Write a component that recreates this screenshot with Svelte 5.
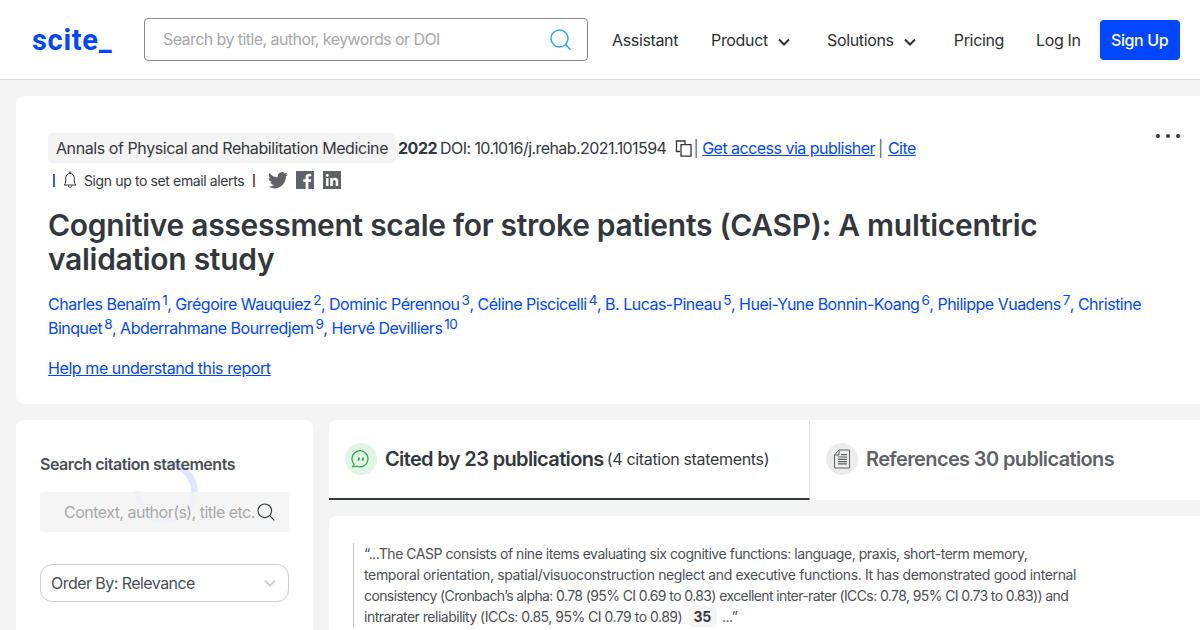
<script>
  const authors = [
    ['Charles Benaïm', 1], ['Grégoire Wauquiez', 2], ['Dominic Pérennou', 3], ['Céline Piscicelli', 4],
    ['B. Lucas-Pineau', 5], ['Huei-Yune Bonnin-Koang', 6], ['Philippe Vuadens', 7], ['Christine Binquet', 8],
    ['Abderrahmane Bourredjem', 9], ['Hervé Devilliers', 10]
  ]
</script>

<div class="page">
  <header class="topbar">
    <div class="logo">scite_</div>
    <div class="search">
      <span class="placeholder">Search by title, author, keywords or DOI</span>
      <svg width="24" height="24" viewBox="0 0 24 24" fill="none" stroke="#2aa8f5" stroke-width="1.5"><circle cx="10.5" cy="10.5" r="8.5"/><path d="M16.7 16.7l5 5"/></svg>
    </div>
    <nav class="nav">
      <span class="item assistant">Assistant</span>
      <span class="item product">Product
        <svg width="12" height="8" viewBox="0 0 12 8" fill="none" stroke="#2b2f33" stroke-width="2"><path d="M1 1.5l5 5 5-5"/></svg>
      </span>
      <span class="item solutions">Solutions
        <svg width="12" height="8" viewBox="0 0 12 8" fill="none" stroke="#2b2f33" stroke-width="2"><path d="M1 1.5l5 5 5-5"/></svg>
      </span>
      <span class="item pricing">Pricing</span>
      <span class="item login">Log In</span>
      <span class="signup">Sign Up</span>
    </nav>
  </header>

  <section class="report">
    <div class="dots"><i></i><i></i><i></i></div>
    <div class="meta">
      <span class="journal">Annals of Physical and Rehabilitation Medicine</span>
      <b class="year">2022</b>
      <span class="doi">DOI: 10.1016/j.rehab.2021.101594</span>
      <svg class="copy" width="18" height="17" viewBox="0 0 18 17" fill="none" stroke="#33383c" stroke-width="1.3"><path d="M7 1H1.500v10.500H5"/><path d="M7 1h3v3"/><rect x="6" y="4.600" width="10" height="11.500"/></svg>
      <span class="sep first">|</span>
      <a href="#top">Get access via publisher</a>
      <span class="sep second">|</span>
      <a href="#top">Cite</a>
    </div>
    <div class="alerts">
      <span class="bar"></span>
      <svg width="14" height="18" viewBox="0 0 14 18" fill="none" stroke="#33383c" stroke-width="1"><path d="M1 14c1.400-1 1.700-2.200 1.700-4.500V6.800C2.700 4.300 4.600 2.500 7 2.500s4.300 1.800 4.300 4.300v2.700c0 2.300.3 3.500 1.700 4.500z"/><path d="M6.300 2.400V1h1.400v1.400M5.300 14.500c0 2.400 3.400 2.400 3.400 0"/></svg>
      <span class="alert-text">Sign up to set email alerts</span>
      <span class="bar red"></span>
      <svg class="tw" width="20" height="17" viewBox="0 0 24 20" fill="#5f6368"><path d="M24 2.400a9.800 9.800 0 0 1-2.800.8A5 5 0 0 0 23.300.5a9.800 9.800 0 0 1-3.100 1.200 4.900 4.900 0 0 0-8.400 4.500A14 14 0 0 1 1.700.9a4.900 4.900 0 0 0 1.500 6.600 4.900 4.900 0 0 1-2.200-.6v.1a4.900 4.900 0 0 0 3.900 4.800 4.900 4.900 0 0 1-2.200.1 4.900 4.900 0 0 0 4.600 3.400A9.900 9.900 0 0 1 0 17.300 14 14 0 0 0 7.500 19.500c9 0 14-7.500 14-14v-.6A10 10 0 0 0 24 2.400z"/></svg>
      <svg class="fb" width="18" height="18" viewBox="0 0 18 18"><rect width="18" height="18" fill="#5f6368"/><path fill="#fff" d="M12.400 18v-7h2.300l.4-2.700h-2.700V6.600c0-.8.200-1.300 1.300-1.300h1.500V2.900c-.3 0-1.100-.1-2.100-.1-2.100 0-3.500 1.300-3.500 3.600v1.900H7.300V11h2.300v7z"/></svg>
      <svg class="li" width="18" height="18" viewBox="0 0 18 18"><rect width="18" height="18" fill="#5f6368"/><path fill="#fff" d="M3 7h2.500v8H3zM4.250 3a1.450 1.450 0 1 1 0 2.900 1.450 1.450 0 0 1 0-2.900zM7.200 7h2.400v1.100c.4-.7 1.300-1.300 2.600-1.300 2.600 0 3 1.700 3 3.900V15h-2.500v-3.800c0-.9 0-2.200-1.300-2.200s-1.500 1-1.500 2.100V15H7.200z"/></svg>
    </div>
    <h1>Cognitive assessment scale for stroke patients (CASP): A multicentric validation study</h1>
    <p class="authors">
      {#each authors as [name, n], i}<a class="author" href="#top">{name}</a><sup>{n}</sup>{i < authors.length - 1 ? ', ' : ''}{/each}
    </p>
    <a class="help" href="#top">Help me understand this report</a>
  </section>

  <div class="columns">
    <aside class="sidebar">
      <svg class="spinner" width="64" height="64" viewBox="0 0 64 64" fill="none" stroke="#0047ff" stroke-opacity=".13" stroke-width="6.500"><path d="M33 3.500a28.500 28.500 0 1 1-29.500 28"/></svg>
      <div class="side-title">Search citation statements</div>
      <div class="side-search">
        <span>Context, author(s), title etc.</span>
        <svg width="18" height="18" viewBox="0 0 18 18" fill="none" stroke="#33383c" stroke-width="1.1"><circle cx="7.800" cy="7.800" r="6.800"/><path d="M12.700 12.700l4.500 4.700"/></svg>
      </div>
      <div class="order">
        <span>Order By: Relevance</span>
        <svg width="12" height="8" viewBox="0 0 12 8" fill="none" stroke="#cfcfcf" stroke-width="2"><path d="M1 1.500l5 5 5-5"/></svg>
      </div>
    </aside>

    <main class="results">
      <div class="tabs">
        <div class="tab active">
          <span class="badge green">
            <svg width="20" height="20" viewBox="0 0 20 20" fill="none" stroke="#2f9e44" stroke-width="1.200"><path d="M3.200 15.300A8 8 0 1 1 6 17.200c-1.300.4-2.700.6-4.200.5.600-.6 1.100-1.400 1.400-2.400z"/><path stroke-width="1.700" d="M7.800 8.500v1.400c0 .7-.3 1.200-.8 1.500M12 8.500v1.400c0 .7-.3 1.200-.8 1.500"/></svg>
          </span>
          <b>Cited by 23 publications</b>
          <span class="count">(4 citation statements)</span>
        </div>
        <div class="tab other">
          <span class="badge grey">
            <svg width="18" height="20" viewBox="0 0 18 20" fill="none" stroke="#5f6368" stroke-width="1"><path d="M6 1h10.500v18h-15V6z"/><path d="M6 1v5H1.500"/><path stroke-width="1.200" d="M5 8h9M5 10.300h9M5 12.600h9M5 14.900h9M8 5.700h6"/></svg>
          </span>
          <b>References 30 publications</b>
        </div>
      </div>
      <div class="statement">
        <blockquote>
          <span class="line l1">“...The CASP consists of nine items evaluating six cognitive functions: language, praxis, short-term memory,</span>
          <span class="line l2">temporal orientation, spatial/visuoconstruction neglect and executive functions. It has demonstrated good internal</span>
          <span class="line l3">consistency (Cronbach’s alpha: 0.78 (95% CI 0.69 to 0.83) excellent inter-rater (ICCs: 0.78, 95% CI 0.73 to 0.83)) and</span>
          <span class="line l4">intrarater reliability (ICCs: 0.85, 95% CI 0.79 to 0.89) <span class="ref">35</span> ...”</span>
        </blockquote>
      </div>
    </main>
  </div>
</div>

<style>
  :global(body) {
    margin: 0;
    background: #f4f4f4;
    overflow: hidden;
  }

  .page {
    height: 630px;
    overflow: hidden;
    font-family: 'Inter', 'Liberation Sans', sans-serif;
    color: #33383c;
  }

  a {
    color: #0047ff;
  }

  .topbar {
    display: flex;
    align-items: center;
    height: 79px;
    background: #fff;
    border-bottom: 1px solid #ddd;
  }

  .logo {
    width: 144px;
    padding-left: 32px;
    box-sizing: border-box;
    font-family: 'Roboto', sans-serif;
    font-size: 29px;
    font-weight: 700;
    letter-spacing: 0.7px;
    color: #0047ff;
  }

  .search {
    display: flex;
    align-items: center;
    justify-content: space-between;
    width: 444px;
    height: 43px;
    box-sizing: border-box;
    padding: 0 14px 0 18px;
    border: 1px solid #8a8a8a;
    border-radius: 4px;
  }

  .placeholder {
    padding-bottom: 2px;
    font-size: 16px;
    letter-spacing: -0.57px;
    color: #a8a8a8;
  }

  .nav {
    display: flex;
    align-items: center;
    flex: 1;
    padding-left: 24px;
    font-size: 16px;
    letter-spacing: -0.35px;
    color: #2b2f33;
  }

  .item svg {
    margin-left: 6px;
  }

  .assistant { margin-right: 33px; }
  .product { margin-right: 37px; }
  .solutions { margin-right: 38px; }
  .pricing { margin-right: 32px; }
  .login { margin-right: 19px; }

  .signup {
    display: flex;
    align-items: center;
    justify-content: center;
    width: 80px;
    height: 40px;
    border-radius: 4px;
    background: #0047ff;
    color: #fff;
    font-weight: 500;
  }

  .report {
    position: relative;
    height: 308px;
    box-sizing: border-box;
    margin: 16px 0 16px 16px;
    padding: 36px 32px 0;
    background: #fff;
    border-radius: 8px 0 0 8px;
  }

  .dots {
    position: absolute;
    top: 38px;
    right: 20px;
    display: flex;
    gap: 6px;
  }

  .dots i {
    width: 4px;
    height: 4px;
    border-radius: 50%;
    background: #33383c;
  }

  .meta {
    display: flex;
    align-items: center;
    height: 32px;
    font-size: 16px;
    letter-spacing: -0.52px;
    white-space: nowrap;
  }

  .journal {
    padding: 5px 8px;
    background: #f4f4f4;
    border-radius: 4px;
    margin-right: 2px;
    letter-spacing: -0.42px;
  }

  .year {
    margin-right: 3px;
  }

  .doi {
    margin-right: 9px;
    letter-spacing: -0.56px;
  }

  .sep {
    color: #5f6368;
  }

  .sep.first {
    margin-right: 4px;
  }

  .sep.second {
    margin: 0 5px 0 3px;
  }

  .alerts {
    display: flex;
    align-items: center;
    height: 24px;
    margin-top: 4px;
    font-size: 14px;
    letter-spacing: -0.38px;
  }

  .bar {
    width: 2px;
    height: 13px;
    margin: 0 8px 0 5px;
    background: #2a6db0;
  }

  .bar.red {
    margin: 0 13px 0 9px;
    background: #a0524a;
  }

  .alert-text {
    margin-left: 7px;
  }

  .fb {
    margin-left: 8px;
  }

  .li {
    margin-left: 9px;
  }

  h1 {
    margin: 16px 0 0;
    font-size: 30px;
    line-height: 34px;
    font-weight: 600;
    letter-spacing: -0.29px;
    max-width: 1040px;
  }

  .authors {
    margin: 16px 0 0;
    font-size: 16px;
    line-height: 24px;
    letter-spacing: -0.5px;
    color: #0047ff;
    max-width: 1110px;
  }

  .author {
    text-decoration: none;
  }

  sup {
    font-size: 13.5px;
    line-height: 0;
    margin-left: 2px;
    vertical-align: 5px;
  }

  .help {
    display: inline-block;
    margin-top: 18px;
    font-size: 16px;
    letter-spacing: -0.42px;
  }

  .columns {
    display: flex;
    gap: 16px;
    margin-left: 16px;
  }

  .sidebar {
    position: relative;
    width: 297px;
    height: 300px;
    box-sizing: border-box;
    padding: 34px 24px 0;
    background: #fff;
    border-radius: 8px;
  }

  .side-title {
    position: relative;
    font-size: 16px;
    font-weight: 600;
    letter-spacing: -0.45px;
    color: #4a4f54;
  }

  .side-search {
    position: relative;
    display: flex;
    align-items: center;
    justify-content: space-between;
    height: 40px;
    margin-top: 18px;
    padding: 0 14px 0 24px;
    background: rgba(244, 244, 244, 0.88);
    border-radius: 4px;
    font-size: 16px;
    letter-spacing: -0.52px;
    color: #a8a8a8;
  }

  .spinner {
    position: absolute;
    left: 118px;
    top: 40px;
  }

  .order {
    display: flex;
    align-items: center;
    justify-content: space-between;
    height: 36px;
    margin-top: 32px;
    padding: 0 12px 0 10px;
    border: 1px solid #ccc;
    border-radius: 12px;
    font-size: 16px;
    letter-spacing: -0.55px;
    color: #4a4f54;
  }

  .results {
    flex: 1;
  }

  .tabs {
    display: flex;
    height: 80px;
  }

  .tab {
    display: flex;
    align-items: center;
    box-sizing: border-box;
    background: #fff;
    font-size: 20px;
    letter-spacing: -0.64px;
  }

  .tab.active {
    width: 481px;
    padding-left: 16px;
    border-radius: 8px 0 0 0;
    border-bottom: 2px solid #33383c;
    border-right: 1px solid #e4e4e4;
  }

  .tab.other {
    flex: 1;
    padding: 0 0 2px 16px;
    color: #5f6368;
    letter-spacing: -0.63px;
  }

  .tab b {
    font-weight: 600;
  }

  .badge {
    display: flex;
    align-items: center;
    justify-content: center;
    width: 32px;
    height: 32px;
    margin-right: 8px;
    border-radius: 50%;
  }

  .badge.green {
    background: #e0f5e4;
  }

  .badge.grey {
    background: #ececec;
  }

  .count {
    margin-left: 3px;
    font-size: 16px;
    letter-spacing: -0.32px;
  }

  .statement {
    margin-top: 16px;
    height: 200px;
    padding: 27px 24px 0;
    background: #fff;
    border-radius: 8px 0 0 0;
  }

  blockquote {
    margin: 0;
    width: 740px;
    padding-left: 10px;
    border-left: 1px solid #c4c4c4;
    font-size: 14px;
    line-height: 21px;
    color: #4a4f54;
  }

  /* the reference's lines break at these words, so each is set on its own */
  .line {
    display: block;
    white-space: nowrap;
  }

  .l1 { letter-spacing: -0.46px; }
  .l2 { letter-spacing: -0.36px; }
  .l3 { letter-spacing: -0.6px; }
  .l4 { letter-spacing: -0.5px; }

  .ref {
    display: inline-block;
    padding: 0 6px;
    margin: 0 2px;
    background: #f4f4f4;
    border-radius: 6px;
    font-weight: 700;
    color: #33383c;
  }
</style>
